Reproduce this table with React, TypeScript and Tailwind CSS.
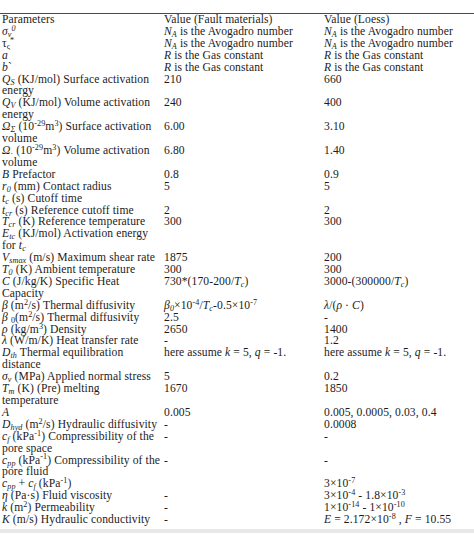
import React from "react";

const I = ({ children }: { children: React.ReactNode }) => <i className="italic">{children}</i>;
const Sb = ({ children }: { children: React.ReactNode }) => <sub className="text-[70%]">{children}</sub>;
const Sp = ({ children }: { children: React.ReactNode }) => <sup className="text-[70%]">{children}</sup>;

type Row = { p: React.ReactNode; a?: React.ReactNode; b?: React.ReactNode };

const rows: Row[] = [
  { p: "Parameters", a: "Value (Fault materials)", b: "Value (Loess)" },
  {
    p: (
      <>
        <I>σ</I>
        <Sb><I>v</I></Sb>
        <Sp><I>0</I></Sp>
      </>
    ),
    a: (
      <>
        <I>N</I>
        <Sb><I>A</I></Sb> is the Avogadro number
      </>
    ),
    b: (
      <>
        <I>N</I>
        <Sb><I>A</I></Sb> is the Avogadro number
      </>
    ),
  },
  {
    p: (
      <>
        τ<Sb>ς</Sb>
        <Sp>*</Sp>
      </>
    ),
    a: (
      <>
        <I>N</I>
        <Sb><I>A</I></Sb> is the Avogadro number
      </>
    ),
    b: (
      <>
        <I>N</I>
        <Sb><I>A</I></Sb> is the Avogadro number
      </>
    ),
  },
  {
    p: <I>a</I>,
    a: (
      <>
        <I>R</I> is the Gas constant
      </>
    ),
    b: (
      <>
        <I>R</I> is the Gas constant
      </>
    ),
  },
  {
    p: (
      <>
        <I>b</I>`
      </>
    ),
    a: (
      <>
        <I>R</I> is the Gas constant
      </>
    ),
    b: (
      <>
        <I>R</I> is the Gas constant
      </>
    ),
  },
  {
    p: (
      <>
        <I>Q</I>
        <Sb><I>S</I></Sb> (KJ/mol) Surface activation
        <br />
        energy
      </>
    ),
    a: "210",
    b: "660",
  },
  {
    p: (
      <>
        <I>Q</I>
        <Sb><I>V</I></Sb> (KJ/mol) Volume activation
        <br />
        energy
      </>
    ),
    a: "240",
    b: "400",
  },
  {
    p: (
      <>
        <I>Ω</I>
        <Sb><I>Σ</I></Sb> (10<Sp>-29</Sp>m<Sp>3</Sp>) Surface activation
        <br />
        volume
      </>
    ),
    a: "6.00",
    b: "3.10",
  },
  {
    p: (
      <>
        <I>Ω</I>
        <Sb>·</Sb> (10<Sp>-29</Sp>m<Sp>3</Sp>) Volume activation
        <br />
        volume
      </>
    ),
    a: "6.80",
    b: "1.40",
  },
  {
    p: (
      <>
        <I>B</I> Prefactor
      </>
    ),
    a: "0.8",
    b: "0.9",
  },
  {
    p: (
      <>
        <I>r</I>
        <Sb><I>0</I></Sb> (mm) Contact radius
      </>
    ),
    a: "5",
    b: "5",
  },
  {
    p: (
      <>
        <I>t</I>
        <Sb><I>c</I></Sb> (s) Cutoff time
      </>
    ),
  },
  {
    p: (
      <>
        <I>t</I>
        <Sb><I>cr</I></Sb> (s) Reference cutoff time
      </>
    ),
    a: "2",
    b: "2",
  },
  {
    p: (
      <>
        <I>T</I>
        <Sb><I>cr</I></Sb> (K) Reference temperature
      </>
    ),
    a: "300",
    b: "300",
  },
  {
    p: (
      <>
        <I>E</I>
        <Sb><I>tc</I></Sb> (KJ/mol) Activation energy
        <br />
        for <I>t</I>
        <Sb><I>c</I></Sb>
      </>
    ),
  },
  {
    p: (
      <>
        <I>V</I>
        <Sb><I>smax</I></Sb> (m/s) Maximum shear rate
      </>
    ),
    a: "1875",
    b: "200",
  },
  {
    p: (
      <>
        <I>T</I>
        <Sb><I>0</I></Sb> (K) Ambient temperature
      </>
    ),
    a: "300",
    b: "300",
  },
  {
    p: (
      <>
        <I>C</I> (J/kg/K) Specific Heat
        <br />
        Capacity
      </>
    ),
    a: (
      <>
        730*(170-200/<I>T</I>
        <Sb><I>c</I></Sb>)
      </>
    ),
    b: (
      <>
        3000-(300000/<I>T</I>
        <Sb><I>c</I></Sb>)
      </>
    ),
  },
  {
    p: (
      <>
        <I>β</I> (m<Sp>2</Sp>/s) Thermal diffusivity
      </>
    ),
    a: (
      <>
        <I>β</I>
        <Sb><I>0</I></Sb>×10<Sp>-4</Sp>/<I>T</I>
        <Sb><I>c</I></Sb>-0.5×10<Sp>-7</Sp>
      </>
    ),
    b: (
      <>
        <I>λ</I>/(<I>ρ</I> · <I>C</I>)
      </>
    ),
  },
  {
    p: (
      <>
        <I>β</I> <Sb>0</Sb>(m<Sp>2</Sp>/s) Thermal diffusivity
      </>
    ),
    a: "2.5",
    b: "-",
  },
  {
    p: (
      <>
        <I>ρ</I> (kg/m<Sp>3</Sp>) Density
      </>
    ),
    a: "2650",
    b: "1400",
  },
  {
    p: (
      <>
        <I>λ</I> (W/m/K) Heat transfer rate
      </>
    ),
    a: "-",
    b: "1.2",
  },
  {
    p: (
      <>
        <I>D</I>
        <Sb><I>th</I></Sb> Thermal equilibration
        <br />
        distance
      </>
    ),
    a: (
      <>
        here assume <I>k</I> = 5, <I>q</I> = -1.
      </>
    ),
    b: (
      <>
        here assume <I>k</I> = 5, <I>q</I> = -1.
      </>
    ),
  },
  {
    p: (
      <>
        <I>σ</I>
        <Sb><I>v</I></Sb> (MPa) Applied normal stress
      </>
    ),
    a: "5",
    b: "0.2",
  },
  {
    p: (
      <>
        <I>T</I>
        <Sb><I>m</I></Sb> (K) (Pre) melting
        <br />
        temperature
      </>
    ),
    a: "1670",
    b: "1850",
  },
  { p: <I>A</I>, a: "0.005", b: "0.005, 0.0005, 0.03, 0.4" },
  {
    p: (
      <>
        <I>D</I>
        <Sb><I>hyd</I></Sb> (m<Sp>2</Sp>/s) Hydraulic diffusivity
      </>
    ),
    a: "-",
    b: "0.0008",
  },
  {
    p: (
      <>
        <I>c</I>
        <Sb><I>f</I></Sb> (kPa<Sp>-1</Sp>) Compressibility of the
        <br />
        pore space
      </>
    ),
    a: "-",
    b: "-",
  },
  {
    p: (
      <>
        <I>c</I>
        <Sb><I>pp</I></Sb> (kPa<Sp>-1</Sp>) Compressibility of the
        <br />
        pore fluid
      </>
    ),
    a: "-",
    b: "-",
  },
  {
    p: (
      <>
        <I>c</I>
        <Sb><I>pp</I></Sb> + <I>c</I>
        <Sb><I>f</I></Sb> (kPa<Sp>-1</Sp>)
      </>
    ),
    b: (
      <>
        3×10<Sp>-7</Sp>
      </>
    ),
  },
  {
    p: (
      <>
        <I>η</I> (Pa·s) Fluid viscosity
      </>
    ),
    a: "-",
    b: (
      <>
        3×10<Sp>-4</Sp> - 1.8×10<Sp>-3</Sp>
      </>
    ),
  },
  {
    p: (
      <>
        <I>k</I> (m<Sp>2</Sp>) Permeability
      </>
    ),
    a: "-",
    b: (
      <>
        1×10<Sp>-14</Sp> - 1×10<Sp>-10</Sp>
      </>
    ),
  },
  {
    p: (
      <>
        <I>K</I> (m/s) Hydraulic conductivity
      </>
    ),
    a: "-",
    b: (
      <>
        <I>E</I> = 2.172×10<Sp>-8</Sp> , <I>F</I> = 10.55
      </>
    ),
  },
];

export default function App() {
  return (
    <div
      className="w-[474px] h-[535px] overflow-hidden bg-white text-[#1c1c1c] pt-[13px]"
      style={{ fontFamily: '"Liberation Serif", "DejaVu Serif", serif' }}
    >
      <div className="border-t-[1.5px] border-[#4a4a4a]">
        <div className="grid grid-cols-[161px_161px_1fr] pl-[2px] text-[11.6px] tracking-[0.1px] leading-[11.9px] whitespace-nowrap">
          {rows.map((r, i) => (
            <React.Fragment key={i}>
              <div className="overflow-visible">{r.p}</div>
              <div className="pl-[1px]">{r.a}</div>
              <div>{r.b}</div>
            </React.Fragment>
          ))}
        </div>
      </div>
      <div className="mt-[3px] h-[4px] bg-[#e8e8e8]" />
    </div>
  );
}
